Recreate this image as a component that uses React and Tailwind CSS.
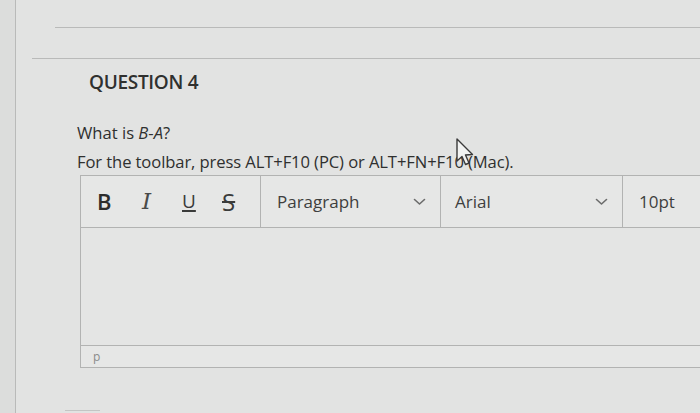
import React from "react";

const font = { fontFamily: '"Open Sans", "Noto Sans", sans-serif' };

function Chevron() {
  return (
    <svg width="13" height="8" viewBox="0 0 13 8" fill="none" stroke="#6b6c6b" strokeWidth="1.6" strokeLinecap="round" strokeLinejoin="round">
      <path d="M1.5 1.5 L6.5 6 L11.5 1.5" />
    </svg>
  );
}

function Cursor() {
  return (
    <svg width="22" height="30" viewBox="0 0 22 30" className="absolute left-[455px] top-[137px]">
      <path d="M2 2 L2 24 L7 19.5 L10.5 27.5 L14 26 L10.5 18 L17.5 17.5 Z" fill="#f2f3f2" stroke="#3a3a3a" strokeWidth="1.4" strokeLinejoin="round" />
    </svg>
  );
}

export default function App() {
  return (
    <div className="relative w-[700px] h-[413px] overflow-hidden bg-[#e2e3e2] text-[#2f302f] flex" style={font}>
      <div className="w-[16px] shrink-0 bg-[#dcdddc] border-r border-[#b9bab9]" />
      <div className="flex-1 flex flex-col">
        <div className="mt-[27px] ml-[39px] h-px bg-[#b9bab9]" />
        <div className="mt-[30px] ml-[16px] h-px bg-[#b9bab9]" />
        <div className="ml-[73px] mt-[10px] text-[19px] font-semibold leading-[26px] tracking-[-0.3px]">QUESTION 4</div>
        <div className="ml-[61px] mt-[26px] text-[16.6px] leading-[23px]">
          What is <i>B</i>-<i>A</i>?
        </div>
        <div className="ml-[61px] mt-[6px] text-[16.6px] leading-[23px] tracking-[-0.1px]">
          For the toolbar, press ALT+F10 (PC) or ALT+FN+F10 (Mac).
        </div>
        <div className="ml-[64px] mt-[2px] border-l border-t border-[#b2b3b2] bg-[#e6e7e6] flex flex-col">
          <div className="h-[52px] flex border-b border-[#b2b3b2]">
            <div className="w-[180px] flex items-center pl-[16px] border-r border-[#b2b3b2]">
              <span className="w-[45px] text-[22px] font-semibold text-[#2c2d2c]">B</span>
              <span className="w-[40px] text-[23px] italic text-[#4a4b4a]" style={{ fontFamily: '"DejaVu Serif", serif' }}>I</span>
              <span className="w-[40px] text-[19px] underline underline-offset-[2px] decoration-[1.5px] text-[#3a3b3a]">U</span>
              <span className="text-[24px] line-through decoration-[1.5px] text-[#3a3b3a]">S</span>
            </div>
            <div className="w-[180px] flex items-center justify-between pl-[16px] pr-[14px] border-r border-[#b2b3b2]">
              <span className="text-[17px] text-[#3e3f3e]">Paragraph</span>
              <Chevron />
            </div>
            <div className="w-[182px] flex items-center justify-between pl-[14px] pr-[14px] border-r border-[#b2b3b2]">
              <span className="text-[17px] text-[#3e3f3e]">Arial</span>
              <Chevron />
            </div>
            <div className="flex-1 flex items-center pl-[16px]">
              <span className="text-[17px] text-[#3e3f3e]">10pt</span>
            </div>
          </div>
          <div className="h-[118px] bg-[#e4e5e4] border-b border-[#b2b3b2]" />
          <div className="h-[22px] flex items-center pl-[12px] border-b border-[#b2b3b2]">
            <span className="text-[12px] text-[#8a8b8a]">p</span>
          </div>
        </div>
        <div className="mt-auto mb-[2px] ml-[49px] w-[35px] h-px bg-[#c4c5c4]" />
      </div>
      <Cursor />
    </div>
  );
}
